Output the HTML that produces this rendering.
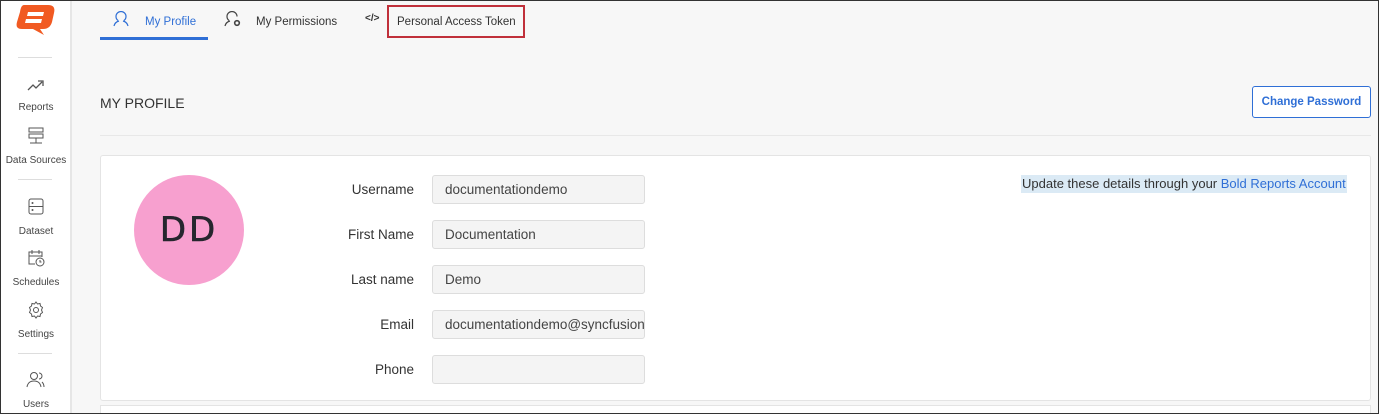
<!DOCTYPE html>
<html><head><style>
*{box-sizing:border-box;margin:0;padding:0}
html,body{width:1379px;height:414px;overflow:hidden}
body{background:#f7f7f7;font-family:"Liberation Sans",sans-serif;position:relative}
.frame{position:absolute;left:0;top:0;width:1379px;height:414px;border:1px solid #333;pointer-events:none;z-index:5}
.side{position:absolute;left:0;top:0;width:72px;height:414px;background:#fff;border-right:2px solid #e6e6e6}
.si{position:absolute;left:0;width:72px;text-align:center;font-size:10px;color:#444}
.si svg{display:block;margin:0 auto 9px}
.hr{position:absolute;left:18px;width:34px;height:1px;background:#ddd}
.tab{position:absolute;top:16px;font-size:11.5px;color:#333}
.lbl{position:absolute;width:84px;text-align:right;font-size:13.5px;color:#333}
.inp{position:absolute;left:432px;width:213px;height:29px;background:#f4f4f4;border:1px solid #ddd;border-radius:3px;font-size:13.5px;color:#444;padding:6px 12px;white-space:nowrap;overflow:hidden}
</style></head><body>
<div class="frame"></div>
<div class="side">
 <svg style="position:absolute;left:14px;top:3px" width="44" height="34" viewBox="0 0 44 34"><path d="M10 2h24q8 0 6 8l-2 9q-2 7-9 7h-3l4 6-11-6H8q-7 0-5-7L6 9q1-7 4-7z" fill="#f15a22"/><path d="M14 9h16l-1 4H13zM12 16h16l-1 4H11z" fill="#fff"/></svg>
 <div class="hr" style="top:57px"></div>
 <div class="si" style="top:77px"><svg width="20" height="16" viewBox="0 0 20 16"><path d="M2 13l5-5 3 3 6-6M12 4h5v5" fill="none" stroke="#555" stroke-width="1.3"/></svg>Reports</div>
 <div class="si" style="top:126px"><svg width="20" height="20" viewBox="0 0 20 20"><rect x="3" y="2" width="14" height="4" fill="none" stroke="#555"/><rect x="3" y="8" width="14" height="4" fill="none" stroke="#555"/><path d="M10 12v5M4 17h12" stroke="#555"/></svg>Data Sources</div>
 <div class="hr" style="top:179px"></div>
 <div class="si" style="top:197px"><svg width="20" height="20" viewBox="0 0 20 20"><rect x="3" y="2" width="14" height="15" rx="2" fill="none" stroke="#555"/><path d="M3 9.5h14" stroke="#555"/><circle cx="6.5" cy="6" r="1" fill="#555"/><circle cx="6.5" cy="13" r="1" fill="#555"/></svg>Dataset</div>
 <div class="si" style="top:248px"><svg width="20" height="20" viewBox="0 0 20 20"><path d="M9 16H3V4h13v5M3 8h13M6 2v4M13 2v4" fill="none" stroke="#555"/><circle cx="14" cy="14" r="4" fill="none" stroke="#555"/><path d="M14 12v2h1.5" stroke="#555" fill="none"/></svg>Schedules</div>
 <div class="si" style="top:300px"><svg width="20" height="20" viewBox="0 0 20 20"><circle cx="10" cy="10" r="2.5" fill="none" stroke="#555"/><path d="M10 2l1.5 2 2.5-.5.5 2.5 2 1.5-1 2.5 1 2.5-2 1.5-.5 2.5-2.5-.5L10 18l-1.5-2-2.5.5-.5-2.5-2-1.5 1-2.5-1-2.5 2-1.5.5-2.5 2.5.5z" fill="none" stroke="#555"/></svg>Settings</div>
 <div class="hr" style="top:353px"></div>
 <div class="si" style="top:370px"><svg width="22" height="20" viewBox="0 0 22 20"><circle cx="9" cy="6" r="3.5" fill="none" stroke="#555"/><path d="M2 17q1-6 7-6t7 6M14 3a3 3 0 010 6M17 12q2 2 2 5" fill="none" stroke="#555"/></svg>Users</div>
</div>
<svg style="position:absolute;left:113px;top:11px" width="16" height="16" viewBox="0 0 16 16"><path d="M5 9.5Q3 8 3 5.5a5 5 0 0110 0q0 2.5-2 4M1 15q1-4 5-5M15 15q-1-4-5-5" fill="none" stroke="#2f6fd6" stroke-width="1.2"/></svg>
<div class="tab" style="left:145px;color:#2f6fd6">My Profile</div>
<div style="position:absolute;left:100px;top:37px;width:108px;height:3px;background:#2f6fd6"></div>
<svg style="position:absolute;left:224px;top:11px" width="18" height="16" viewBox="0 0 18 16"><path d="M5 9.5Q3 8 3 5.5a5 5 0 0110 0M1 15q1-4 5-5" fill="none" stroke="#444" stroke-width="1.2"/><circle cx="13" cy="12" r="2.3" fill="none" stroke="#444" stroke-width="1.6"/></svg>
<div class="tab" style="left:256px">My Permissions</div>
<div class="tab" style="left:365px;top:13px;font-size:10px;font-weight:bold">&lt;/&gt;</div>
<div style="position:absolute;left:387px;top:5px;width:138px;height:33px;border:2px solid #c0303a"></div>
<div class="tab" style="left:397px">Personal Access Token</div>
<div style="position:absolute;left:100px;top:95px;font-size:14px;color:#333">MY PROFILE</div>
<div style="position:absolute;left:1252px;top:86px;width:119px;height:32px;border:1px solid #2f6fd6;border-radius:3px;background:#fff;color:#2f6fd6;font-size:11.5px;font-weight:bold;text-align:center;line-height:30px">Change Password</div>
<div style="position:absolute;left:100px;top:135px;width:1271px;height:1px;background:#e8e8e8"></div>
<div style="position:absolute;left:100px;top:155px;width:1271px;height:246px;background:#fff;border:1px solid #e4e4e4;border-radius:3px"></div>
<div style="position:absolute;left:100px;top:405px;width:1271px;height:10px;background:#fff;border:1px solid #e4e4e4"></div>
<div style="position:absolute;left:134px;top:175px;width:110px;height:110px;border-radius:50%;background:#f7a0cf;text-align:center;line-height:110px;font-size:34px;color:#26262e;font-family:'DejaVu Sans',sans-serif;letter-spacing:3px;-webkit-text-stroke:0.6px #26262e">DD</div>
<div class="lbl" style="left:330px;top:182px">Username</div>
<div class="lbl" style="left:330px;top:227px">First Name</div>
<div class="lbl" style="left:330px;top:272px">Last name</div>
<div class="lbl" style="left:330px;top:317px">Email</div>
<div class="lbl" style="left:330px;top:362px">Phone</div>
<div class="inp" style="top:175px">documentationdemo</div>
<div class="inp" style="top:220px">Documentation</div>
<div class="inp" style="top:265px">Demo</div>
<div class="inp" style="top:310px">documentationdemo@syncfusion</div>
<div class="inp" style="top:355px"></div>
<div style="position:absolute;left:1021px;top:175px;height:18px;padding:0 1px;background:#dbeaf5;font-size:13px;color:#333;line-height:18px;white-space:nowrap">Update these details through your <span style="color:#2f6fd6">Bold Reports Account</span></div>
</body></html>
